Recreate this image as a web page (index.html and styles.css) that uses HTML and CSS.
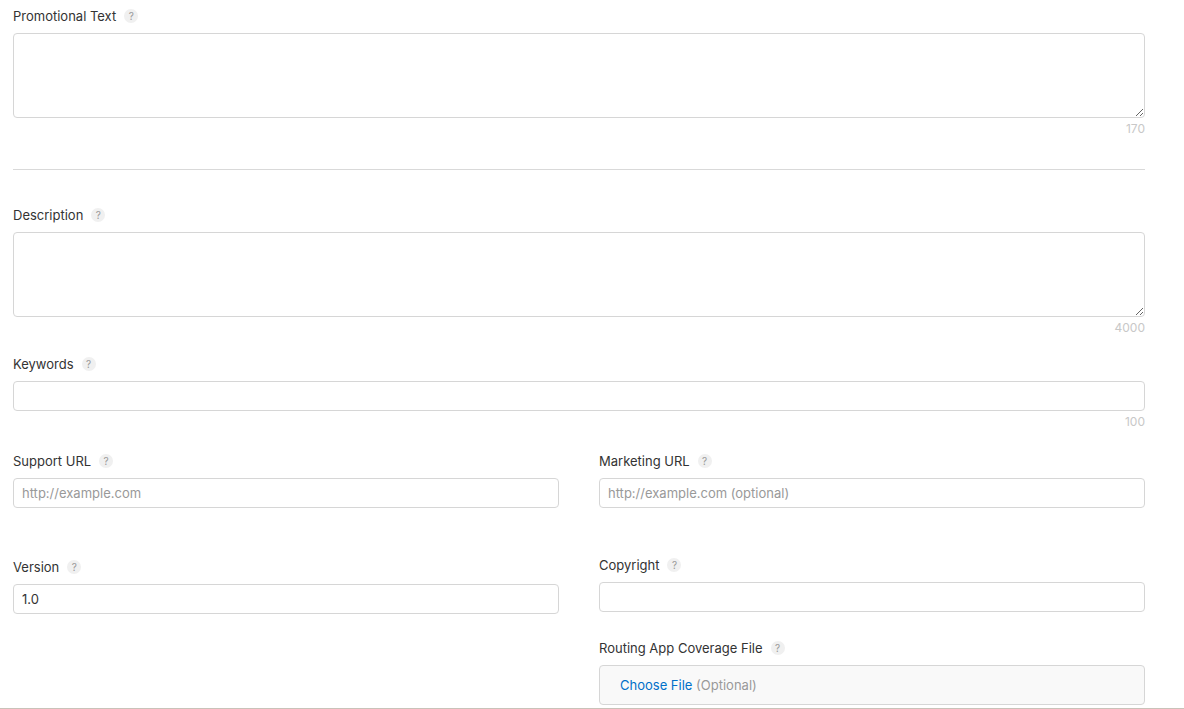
FILE: index.html
```html
<!DOCTYPE html>
<html lang="en">
<head>
    <meta charset="UTF-8">
    <title>App Information</title>
    <link rel="stylesheet" href="styles.css">
</head>
<body>
    <div class="page">
        <div class="field">
            <div class="label">Promotional Text <span class="help">?</span></div>
            <textarea class="box"></textarea>
            <div class="counter">170</div>
        </div>

        <hr class="divider">

        <div class="field">
            <div class="label">Description <span class="help">?</span></div>
            <textarea class="box"></textarea>
            <div class="counter">4000</div>
        </div>

        <div class="field keywords">
            <div class="label">Keywords <span class="help">?</span></div>
            <input class="line" type="text">
            <div class="counter">100</div>
        </div>

        <div class="columns">
            <div class="field">
                <div class="label">Support URL <span class="help">?</span></div>
                <input class="line" type="text" placeholder="http://example.com">
            </div>
            <div class="field">
                <div class="label">Marketing URL <span class="help">?</span></div>
                <input class="line" type="text" placeholder="http://example.com (optional)">
            </div>

            <div class="field version">
                <div class="label">Version <span class="help">?</span></div>
                <input class="line" type="text" value="1.0">
            </div>
            <div class="field copyright">
                <div class="label">Copyright <span class="help">?</span></div>
                <input class="line" type="text">
            </div>

            <div></div>
            <div class="field routing">
                <div class="label">Routing App Coverage File <span class="help">?</span></div>
                <div class="file-box"><span class="choose">Choose File</span> (Optional)</div>
            </div>
        </div>
    </div>
</body>
</html>
```

FILE: styles.css
```css
* {
    font-family: 'Inter', 'Liberation Sans', Arial, sans-serif;
    box-sizing: border-box;
}
body {
    margin: 0;
    padding: 0;
    background-color: #fff;
    color: #333;
}
.page {
    height: 709px;
    overflow: hidden;
    padding: 7px 39px 0 13px;
    border-bottom: 1px solid #c9c2b9;
}
.label {
    height: 18px;
    line-height: 18px;
    font-size: 13px;
    color: #333;
    margin-bottom: 8px;
    display: flex;
    align-items: center;
}
.help {
    display: inline-flex;
    align-items: center;
    justify-content: center;
    width: 14px;
    height: 14px;
    margin-left: 8px;
    border-radius: 50%;
    background-color: #f0f0f0;
    color: #999;
    font-size: 10px;
}
.box {
    display: block;
    width: 100%;
    height: 85px;
    border: 1px solid #d6d6d6;
    border-radius: 4px;
    padding: 8px;
    font-size: 13px;
    resize: vertical;
    background: #fff;
}
.line {
    display: block;
    width: 100%;
    height: 30px;
    border: 1px solid #d6d6d6;
    border-radius: 4px;
    padding: 0 8px;
    font-size: 13px;
    color: #333;
    background: #fff;
}
.line::placeholder {
    color: #999;
}
.counter {
    text-align: right;
    font-size: 12px;
    line-height: 12px;
    color: #c8c8c8;
    margin-top: 5px;
}
.divider {
    border: none;
    border-top: 1px solid #d9d9d9;
    margin: 34px 0 36px;
}
.keywords {
    margin-top: 21px;
}
.columns {
    display: grid;
    grid-template-columns: 1fr 1fr;
    column-gap: 40px;
    margin-top: 24px;
}
.version {
    margin-top: 50px;
}
.copyright {
    margin-top: 48px;
}
.routing {
    margin-top: 25px;
}
.file-box {
    height: 40px;
    border: 1px solid #d6d6d6;
    border-radius: 4px;
    background-color: #f9f9f9;
    padding: 0 20px;
    display: flex;
    align-items: center;
    font-size: 13px;
    color: #999;
    white-space: pre;
}
.choose {
    color: #0070c9;
}
```
